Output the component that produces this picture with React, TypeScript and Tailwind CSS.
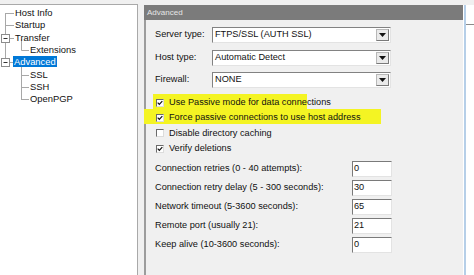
import React from "react";

const font = { fontFamily: '"Liberation Sans", Arial, sans-serif' };

function TreeRow({ indent, label, selected }: { indent: number; label: string; selected?: boolean }) {
  return (
    <div className="h-[12.3px] flex items-center" style={{ paddingLeft: indent }}>
      <span
        className={
          selected
            ? "bg-[#0078d7] text-white px-[1px] h-[11px] leading-[11px] -ml-[2px]"
            : "text-[#111] leading-[11px]"
        }
      >
        {label}
      </span>
    </div>
  );
}

function ExpandBox({ y }: { y: number }) {
  return (
    <g>
      <rect x={1.5} y={y - 3.5} width={8} height={8} fill="white" stroke="#8c8c8c" strokeWidth={1} />
      <line x1={3.5} y1={y + 0.5} x2={7.5} y2={y + 0.5} stroke="#333" strokeWidth={1} />
    </g>
  );
}

function Select({ value }: { value: string }) {
  return (
    <div className="w-[179px] h-[16px] bg-white border-t border-l border-[#828282] border-r border-b border-r-[#e3e3e3] border-b-[#e3e3e3] flex items-center pl-[2px] pr-[1px]">
      <span className="flex-1 text-[9.2px] text-[#111] leading-none">{value}</span>
      <div className="w-[13px] h-[12px] bg-[#eaeaea] border border-[#b8b8b8] border-b-[#7a7a7a] border-r-[#7a7a7a] flex items-center justify-center">
        <svg width="7" height="4" viewBox="0 0 7 4">
          <path d="M0 0 H7 L3.5 4 Z" fill="#111" />
        </svg>
      </div>
    </div>
  );
}

function Check({ checked }: { checked: boolean }) {
  return (
    <div className="w-[8px] h-[8px] bg-white border-t border-l border-[#6a6a6a] border-r border-b border-r-[#dcdcdc] border-b-[#dcdcdc] flex items-center justify-center shrink-0">
      {checked && (
        <svg width="7" height="6" viewBox="0 0 7 6">
          <path d="M0.8 2.6 L2.7 4.6 L6.2 0.8" fill="none" stroke="#111" strokeWidth="1.4" />
        </svg>
      )}
    </div>
  );
}

function CheckRow({ label, checked, hl }: { label: string; checked: boolean; hl?: 1 | 2 }) {
  return (
    <div className="relative h-[15.3px] flex items-center pl-[10px]">
      {hl === 1 && <div className="absolute left-[7px] top-[-1px] w-[154px] h-[16px] bg-[#f4f423]" />}
      {hl === 2 && <div className="absolute left-[-2px] top-[-1px] w-[237px] h-[15px] bg-[#f4f423]" />}
      <div className="relative flex items-center">
        <Check checked={checked} />
        <span className="ml-[5px] text-[9.2px] text-[#111] leading-none">{label}</span>
      </div>
    </div>
  );
}

function NumRow({ label, value }: { label: string; value: string }) {
  return (
    <div className="h-[19px] flex items-center pl-[9px]">
      <span className="w-[197px] text-[9.2px] text-[#111] leading-none">{label}</span>
      <div className="w-[40px] h-[16px] bg-white border-t border-l border-[#7a7a7a] border-r border-b border-r-[#e3e3e3] border-b-[#e3e3e3] flex items-center pl-[1px]">
        <span className="text-[9.2px] text-[#111] leading-none">{value}</span>
      </div>
    </div>
  );
}

export default function App() {
  return (
    <div className="w-[474px] h-[275px] bg-[#f0f0f0] overflow-hidden flex" style={font}>
      {/* Left tree */}
      <div className="w-[138px] mt-[4px] bg-white border-t border-r border-[#a9a9a9] relative pt-[1.5px] text-[9.4px]">
        <svg className="absolute left-0 top-0" width="40" height="110">
          <g stroke="#a8a8a8" strokeWidth="1" fill="none">
            <line x1={5.5} y1={8} x2={5.5} y2={57} />
            <line x1={5.5} y1={8.5} x2={14} y2={8.5} />
            <line x1={5.5} y1={20.5} x2={14} y2={20.5} />
            <line x1={5.5} y1={33.5} x2={14} y2={33.5} />
            <line x1={21.5} y1={34} x2={21.5} y2={45.5} />
            <line x1={21.5} y1={45.5} x2={29} y2={45.5} />
            <line x1={5.5} y1={57.5} x2={13} y2={57.5} />
            <line x1={21.5} y1={58} x2={21.5} y2={95} />
            <line x1={21.5} y1={70.5} x2={29} y2={70.5} />
            <line x1={21.5} y1={82.5} x2={29} y2={82.5} />
            <line x1={21.5} y1={94.5} x2={29} y2={94.5} />
          </g>
          <ExpandBox y={33} />
          <ExpandBox y={57} />
        </svg>
        <div className="relative">
          <TreeRow indent={15} label="Host Info" />
          <TreeRow indent={15} label="Startup" />
          <TreeRow indent={15} label="Transfer" />
          <TreeRow indent={30} label="Extensions" />
          <TreeRow indent={15} label="Advanced" selected />
          <TreeRow indent={30} label="SSL" />
          <TreeRow indent={30} label="SSH" />
          <TreeRow indent={30} label="OpenPGP" />
        </div>
      </div>

      {/* Right panel */}
      <div className="ml-[6px] mt-[5px] w-[319px] flex flex-col">
        <div className="h-[15px] bg-[#7b7b7b] flex items-center pl-[3px]">
          <span className="text-[8px] text-[#e6e6e6] leading-none">Advanced</span>
        </div>
        <div className="flex-1 border-l-2 border-[#9c9c9c] bg-[#f0f0f0] pt-[7px]">
          <div className="flex items-center pl-[9px]">
            <span className="w-[57px] text-[9.2px] text-[#111] leading-none">Server type:</span>
            <Select value="FTPS/SSL (AUTH SSL)" />
          </div>
          <div className="flex items-center pl-[9px] mt-[7px]">
            <span className="w-[57px] text-[9.2px] text-[#111] leading-none">Host type:</span>
            <Select value="Automatic Detect" />
          </div>
          <div className="flex items-center pl-[9px] mt-[6px]">
            <span className="w-[57px] text-[9.2px] text-[#111] leading-none">Firewall:</span>
            <Select value="NONE" />
          </div>
          <div className="mt-[7px]">
            <CheckRow label="Use Passive mode for data connections" checked hl={1} />
            <CheckRow label="Force passive connections to use host address" checked hl={2} />
            <CheckRow label="Disable directory caching" checked={false} />
            <CheckRow label="Verify deletions" checked />
          </div>
          <div className="mt-[3px]">
            <NumRow label="Connection retries (0 - 40 attempts):" value="0" />
            <NumRow label="Connection retry delay (5 - 300 seconds):" value="30" />
            <NumRow label="Network timeout (5-3600 seconds):" value="65" />
            <NumRow label="Remote port (usually 21):" value="21" />
            <NumRow label="Keep alive (10-3600 seconds):" value="0" />
          </div>
        </div>
      </div>

      {/* right edge */}
      <div className="w-[1px] mt-[5px] bg-white" />
      <div className="w-[2px] mt-[5px] bg-[#b6cfe8]" />
      <div className="flex-1 mt-[5px] bg-white flex flex-col">
        <div className="h-[19px]" />
        <div className="h-[1px] bg-[#8a8a8a]" />
      </div>
    </div>
  );
}
